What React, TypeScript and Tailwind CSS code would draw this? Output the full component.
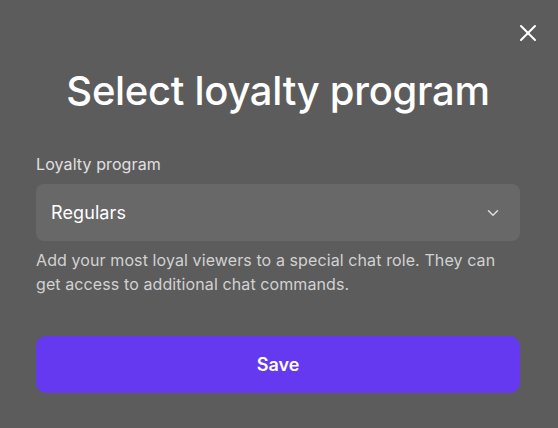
import React from 'react';
import { X, ChevronDown } from 'lucide-react';

export default function App() {
  return (
    <div className="relative w-[558px] h-[428px] bg-[#5c5c5c] text-white font-['Inter',sans-serif] pl-9 pr-[38px] pt-[67px]">
      <button className="absolute right-[16px] top-[19px] text-white">
        <X className="h-7 w-7" strokeWidth={1.75} />
      </button>
      <h1 className="text-center text-[40px] leading-[48px] font-medium tracking-[-0.3px]">Select loyalty program</h1>
      <label className="block mt-[37px] text-[16px] leading-6 tracking-[0.1px] text-[#e0e0e0]">Loyalty program</label>
      <div className="mt-[8px] h-[57px] rounded-lg bg-[#686868] flex items-center justify-between pl-[15px] pr-[18px]">
        <span className="text-[18px] tracking-[0.1px] text-white">Regulars</span>
        <ChevronDown className="h-[18px] w-[18px] text-[#dcdcdc]" strokeWidth={2} />
      </div>
      <p className="mt-[7px] pr-[20px] text-[16px] leading-6 tracking-[0.1px] text-[#d2d2d2]">
        Add your most loyal viewers to a special chat role. They can get access to additional chat commands.
      </p>
      <button className="mt-[40px] w-full h-[57px] rounded-[10px] bg-[#6439ef] text-[18px] font-semibold text-white">
        Save
      </button>
    </div>
  );
}
